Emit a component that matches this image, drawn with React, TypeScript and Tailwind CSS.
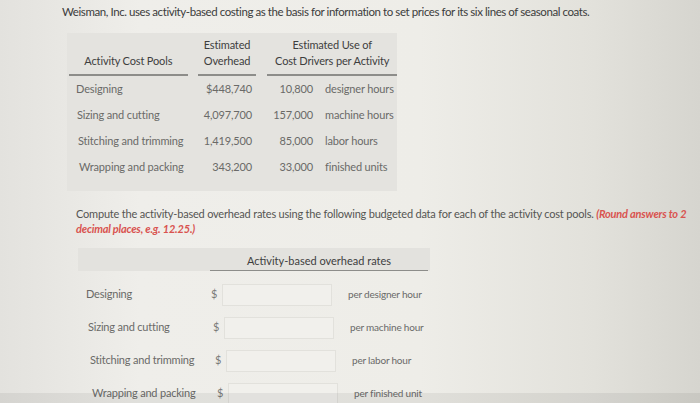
const pools = [
  { name: "Designing", overhead: "$448,740", use: "10,800", driver: "designer hours" },
  { name: "Sizing and cutting", overhead: "4,097,700", use: "157,000", driver: "machine hours" },
  { name: "Stitching and trimming", overhead: "1,419,500", use: "85,000", driver: "labor hours" },
  { name: "Wrapping and packing", overhead: "343,200", use: "33,000", driver: "finished units" },
];

const rates = [
  { name: "Designing", unit: "per designer hour" },
  { name: "Sizing and cutting", unit: "per machine hour" },
  { name: "Stitching and trimming", unit: "per labor hour" },
  { name: "Wrapping and packing", unit: "per finished unit" },
];

export default function App() {
  return (
    <div
      className="w-[700px] h-[403px] overflow-hidden relative bg-[linear-gradient(90deg,#e3e2de_0%,#efeeea_20%,#eeede8_60%,#e2e1db_85%,#d6d5cf_100%)] text-[#4a4a4a]"
      style={{ fontFamily: "Lato, 'Open Sans', sans-serif" }}
    >
      {/* Intro */}
      <p className="pl-[62px] pt-[4px] text-[11.5px] leading-[16px] tracking-[-0.42px] text-[#3c3c3c]">
        Weisman, Inc. uses activity-based costing as the basis for information to set prices for its six lines of seasonal coats.
      </p>

      {/* Cost pools table */}
      <div className="ml-[67px] mt-[13px] w-[330px] h-[158px] bg-[#e4e3df] pt-[5px] text-[11px] tracking-[-0.15px]">
        <div className="flex items-end h-[38px] text-[#3e3e3e] leading-[16px] text-center">
          <div className="w-[119px] ml-[2px] border-b-2 border-[#8d8d8a] pb-[5px] whitespace-nowrap">Activity Cost Pools</div>
          <div className="w-[59px] ml-[10px] border-b-2 border-[#8d8d8a] pb-[5px]">
            Estimated
            <br />
            Overhead
          </div>
          <div className="w-[130px] ml-[11px] border-b-2 border-[#8d8d8a] pb-[5px] whitespace-nowrap">
            Estimated Use of
            <br />
            Cost Drivers per Activity
          </div>
        </div>
        <div>
          {pools.map((p, i) => (
            <div key={p.name} className="flex items-center h-[26px] text-[#6a6a68] whitespace-nowrap">
              <div className="w-[112px]" style={{ paddingLeft: 9 + i }}>{p.name}</div>
              <div className="w-[73px] text-right">{p.overhead}</div>
              <div className="w-[61px] text-right">{p.use}</div>
              <div className="pl-[12px]">{p.driver}</div>
            </div>
          ))}
        </div>
      </div>

      {/* Instructions */}
      <p className="ml-[76px] mt-[15px] w-[620px] text-[11px] leading-[15px] tracking-[-0.2px] text-[#555553]">
        Compute the activity-based overhead rates using the following budgeted data for each of the activity cost pools.{" "}
        <span className="italic font-bold text-[#d9534f]">(Round answers to 2</span>
        <br />
        <span className="italic font-bold text-[#d9534f]">decimal places, e.g. 12.25.)</span>
      </p>

      {/* Rates table */}
      <div className="ml-[78px] mt-[12px] w-[352px] h-[23px] bg-[#e3e2de] flex items-end">
        <div className="ml-[132px] w-[218px] border-b border-[#8d8d8a] text-center text-[11px] leading-[15px] pb-[2px] text-[#3e3e3e]">
          Activity-based overhead rates
        </div>
      </div>
      <div className="mt-[7px]">
        {rates.map((r, i) => (
          <div key={r.name} className="flex items-center h-[33px] text-[11px] tracking-[-0.2px] text-[#6a6a68] whitespace-nowrap">
            <div className="w-[125px]" style={{ marginLeft: 86 + i * 2 }}>{r.name}</div>
            <div className="w-[11px] text-[#7a7a78]">$</div>
            <div className="w-[110px] h-[22px] border border-[#e2e1dc] bg-[#f1f0ec]" />
            <div className="ml-[16px] text-[10px]">{r.unit}</div>
          </div>
        ))}
      </div>

      <div className="absolute left-0 right-0 bottom-0 h-[10px] bg-black/[0.06]" />
    </div>
  );
}
